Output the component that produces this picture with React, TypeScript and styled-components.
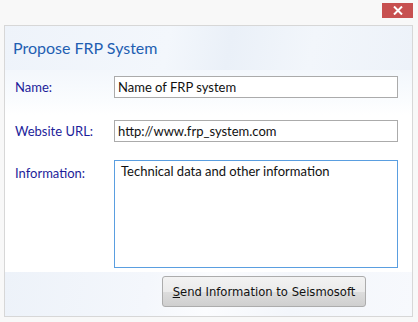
import React from 'react'
import styled, { createGlobalStyle } from 'styled-components'

const GlobalStyle = createGlobalStyle`
  html, body {
    margin: 0;
    padding: 0;
    background: #f8f8f8;
  }
`

const FONT = `Lato, 'Open Sans', sans-serif`

const Window = styled.div`
  width: 418px;
  height: 322px;
  display: flex;
  flex-direction: column;
  background: #f8f8f8;
  font-family: ${FONT};
  box-sizing: border-box;
`

const TitleBar = styled.div`
  height: 27px;
  display: flex;
  justify-content: flex-end;
  align-items: flex-start;
  padding-right: 5px;
  padding-top: 3px;
  box-sizing: border-box;
`

const Close = styled.div`
  width: 31px;
  height: 15px;
  background: #c75050;
  display: flex;
  justify-content: center;
  align-items: center;
`

const Panel = styled.div`
  flex: 1;
  margin: 0 5px 5px 4px;
  border: 1px solid #d7d7d7;
  display: flex;
  flex-direction: column;
  background: #fff;
`

const Header = styled.div`
  height: 44px;
  display: flex;
  align-items: center;
  padding: 0 0 2px 8px;
  box-sizing: border-box;
  background: linear-gradient(100deg, #eef3fa 0%, #f3f7fc 40%, #eaf0f8 55%, #f2f6fb 75%, #edf2f9 100%);
`

const Title = styled.h1`
  margin: 0;
  font-size: 16px;
  font-weight: 400;
  color: #1f5fb2;
`

const Form = styled.div`
  display: grid;
  grid-template-columns: 109px 284px;
  grid-template-rows: 22px 22px 108px;
  row-gap: 22px;
  align-items: start;
  padding-top: 6px;
  background: linear-gradient(180deg, #f3f7fc 0px, #fafcfe 30px, #fff 45px);
  flex: 1;
`

const Label = styled.label<{ $top?: number }>`
  padding-left: 10px;
  padding-top: ${p => p.$top ?? 2}px;
  font-size: 13px;
  color: #1d1d9a;
  line-height: 18px;
`

const Input = styled.div`
  height: 22px;
  box-sizing: border-box;
  border: 1px solid #ababab;
  background: #fff;
  padding: 0 3px;
  font-size: 13px;
  line-height: 20px;
  color: #111;
  white-space: nowrap;
`

const TextArea = styled.div`
  height: 108px;
  box-sizing: border-box;
  border: 1px solid #5a9ee0;
  background: #fff;
  padding: 1px 6px;
  font-size: 13px;
  line-height: 18px;
  color: #111;
  margin-top: -4px;
`

const Footer = styled.div`
  height: 44px;
  display: flex;
  justify-content: flex-end;
  align-items: flex-start;
  padding: 4px 46px 0 0;
  box-sizing: border-box;
  background: linear-gradient(100deg, #edf2f9 0%, #f4f7fc 35%, #fbfcfe 50%, #f3f6fb 70%, #f7f9fd 100%);
`

const Button = styled.button`
  width: 204px;
  height: 31px;
  border: 1px solid #acacac;
  border-radius: 3px;
  background: linear-gradient(180deg, #f2f2f2 0%, #ebebeb 50%, #dddddd 51%, #cfcfcf 100%);
  font-family: 'DejaVu Sans', sans-serif;
  font-size: 11.6px;
  color: #111;
  padding: 0;
  u {
    text-decoration: underline;
  }
`

export default function App() {
  return (
    <>
      <GlobalStyle />
      <Window>
        <TitleBar>
          <Close>
            <svg width="10" height="9" viewBox="0 0 10 9">
              <path d="M1 0.5 L9 8.5 M9 0.5 L1 8.5" stroke="#fff" strokeWidth="2" />
            </svg>
          </Close>
        </TitleBar>
        <Panel>
          <Header>
            <Title>Propose FRP System</Title>
          </Header>
          <Form>
            <Label>Name:</Label>
            <Input>Name of FRP system</Input>
            <Label>Website URL:</Label>
            <Input>http://www.frp_system.com</Input>
            <Label $top={-2}>Information:</Label>
            <TextArea>Technical data and other information</TextArea>
          </Form>
          <Footer>
            <Button>
              <u>S</u>end Information to Seismosoft
            </Button>
          </Footer>
        </Panel>
      </Window>
    </>
  )
}
